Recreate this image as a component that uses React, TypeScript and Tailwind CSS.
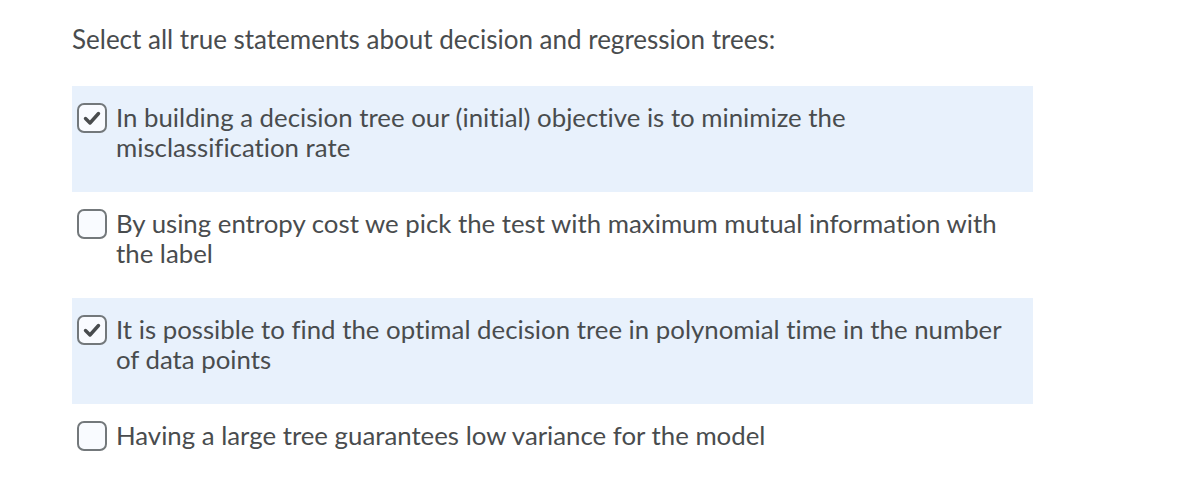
import React from "react";

const items = [
  { text: "In building a decision tree our (initial) objective is to minimize the misclassification rate", checked: true },
  { text: "By using entropy cost we pick the test with maximum mutual information with the label", checked: false },
  { text: "It is possible to find the optimal decision tree in polynomial time in the number of data points", checked: true },
  { text: "Having a large tree guarantees low variance for the model", checked: false },
];

function Box({ checked }: { checked: boolean }) {
  return (
    <div className="w-[30px] h-[30px] min-w-[30px] shrink-0 rounded-[7px] border-[2px] border-solid border-[#73787b] bg-[#f9fbff] flex items-center justify-center mt-[1px] box-border">
      {checked && (
        <svg width="20" height="20" viewBox="0 0 20 20" fill="none">
          <path d="M3.5 10.5 L8 15 L16.5 5.5" stroke="#494c4e" strokeWidth="3.4" strokeLinecap="round" strokeLinejoin="round" />
        </svg>
      )}
    </div>
  );
}

export default function App() {
  return (
    <div className="w-[1190px] h-[492px] bg-white text-[#494c4e]" style={{ fontFamily: "Lato, 'Open Sans', sans-serif", fontVariantLigatures: "none" }}>
      <div className="pl-[72px] pt-[22px]">
        <div className="text-[26px] leading-[34px] h-[64px]">Select all true statements about decision and regression trees:</div>
        <div className="w-[961px] flex flex-col">
          {items.map((it, i) => (
            <div key={i} className={`h-[106px] flex gap-[9px] pl-[5px] pr-[14px] pt-[16px] ${it.checked ? "bg-[#e8f1fc]" : ""}`}>
              <Box checked={it.checked} />
              <div className="text-[25.8px] leading-[30px]">{it.text}</div>
            </div>
          ))}
        </div>
      </div>
    </div>
  );
}
